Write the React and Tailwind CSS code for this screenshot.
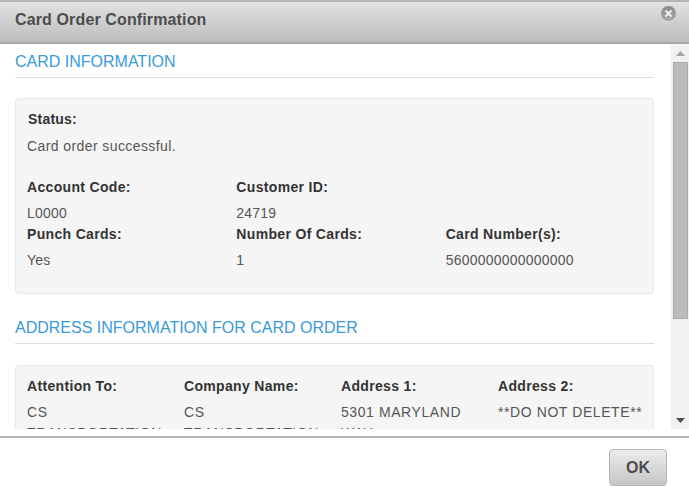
import React from 'react';

const font = { fontFamily: '"Liberation Sans", Arial, sans-serif' };

const Field = ({ label, value, wide }) => (
    <div className="pr-[12px]">
        <div className="text-[14px] leading-[21px] font-bold text-[#333333] tracking-[0.33px] mb-[5px]">{label}</div>
        <div className={wide ? 'text-[14px] leading-[21px] text-[#555555] tracking-[0.58px]' : 'text-[14px] leading-[21px] text-[#555555] tracking-[0.22px]'}>{value}</div>
    </div>
);

const SectionTitle = ({ children }) => (
    <div className="border-b border-[#dddddd] text-[16px] leading-[20px] text-[#3a9ad9] pt-[1px] pb-[5px]">{children}</div>
);

const Scrollbar = () => (
    <div className="w-[18px] shrink-0 bg-[#f1f1f1] flex flex-col items-center">
        <div className="h-[18px] w-full flex items-center justify-center">
            <svg width="9" height="5" viewBox="0 0 9 5"><path d="M4.5 0L9 5H0z" fill="#a3a3a3" /></svg>
        </div>
        <div className="w-[15px] h-[257px] bg-[#bcbcbc] border border-[#acacac]" />
        <div className="flex-1" />
        <div className="h-[18px] w-full flex items-center justify-center">
            <svg width="9" height="5" viewBox="0 0 9 5"><path d="M0 0H9L4.5 5z" fill="#505050" /></svg>
        </div>
    </div>
);

export default function App() {
    return (
        <div className="w-[689px] h-[493px] bg-white flex flex-col overflow-hidden" style={font}>
            <header className="h-[44px] shrink-0 border-t-2 border-b-2 border-t-[#b5b5b5] border-b-[#a8a8a8] bg-gradient-to-b from-[#e2e2e2] to-[#bdbdbd] flex items-start justify-between pl-[15px] pr-[12px]">
                <h1 className="mt-[8px] text-[16px] leading-[20px] font-bold text-[#4d4d4d] tracking-[0.13px]">Card Order Confirmation</h1>
                <button className="mt-[3px] w-[17px] h-[17px] rounded-full bg-gradient-to-b from-[#8a8a8a] to-[#a8a8a8] border border-[#d8d8d8] flex items-center justify-center">
                    <svg width="9" height="9" viewBox="0 0 9 9"><path d="M1.5 1.5L7.5 7.5M7.5 1.5L1.5 7.5" stroke="#f2f2f2" strokeWidth="2" /></svg>
                </button>
            </header>

            <div className="h-[385px] shrink-0 flex overflow-hidden">
                <div className="flex-1 overflow-hidden pl-[15px] pr-[17px] pt-[7px]">
                    <SectionTitle>CARD INFORMATION</SectionTitle>
                    <div className="mt-[20px] h-[196px] bg-[#f5f5f5] border border-[#e8e8e8] rounded-[3px] pl-[11px] pt-[10px]">
                        <div className="text-[14px] leading-[21px] font-bold text-[#333333] tracking-[0.2px] pl-[1px]">Status:</div>
                        <div className="mt-[6px] text-[14px] leading-[21px] text-[#555555] tracking-[0.41px]">Card order successful.</div>
                        <div className="mt-[20px] w-[628px] grid grid-cols-3">
                            <Field label="Account Code:" value="L0000" />
                            <Field label="Customer ID:" value="24719" />
                            <div />
                            <Field label="Punch Cards:" value="Yes" />
                            <Field label="Number Of Cards:" value="1" />
                            <Field label="Card Number(s):" value="5600000000000000" />
                        </div>
                    </div>
                    <div className="mt-[23px]">
                        <SectionTitle>ADDRESS INFORMATION FOR CARD ORDER</SectionTitle>
                    </div>
                    <div className="mt-[21px] bg-[#f5f5f5] border border-[#e8e8e8] rounded-[3px] pl-[11px] pt-[10px] pb-[20px]">
                        <div className="w-[628px] grid grid-cols-4">
                            <Field label="Attention To:" value="CS TRANSPORTATION" wide />
                            <Field label="Company Name:" value="CS TRANSPORTATION" wide />
                            <Field label="Address 1:" value="5301 MARYLAND WAY" wide />
                            <Field label="Address 2:" value="**DO NOT DELETE**" wide />
                        </div>
                    </div>
                </div>
                <Scrollbar />
            </div>

            <footer className="mt-[7px] flex-1 border-t-2 border-[#b5b5b5] flex items-start justify-end pt-[11px] pr-[22px]">
                <button className="w-[58px] h-[37px] rounded-[4px] border border-[#b5b5b5] bg-gradient-to-b from-[#ececec] to-[#c6c6c6] text-[16px] font-bold text-[#4d4d4d]">OK</button>
            </footer>
        </div>
    );
}
